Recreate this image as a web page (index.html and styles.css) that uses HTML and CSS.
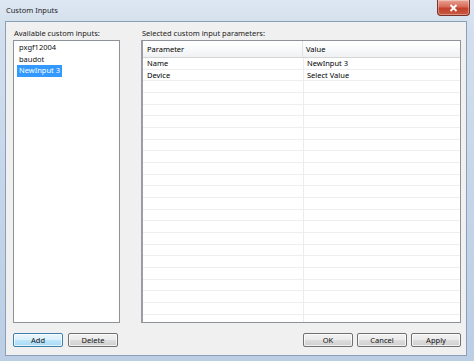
FILE: index.html
```html
<!DOCTYPE html>
<html>
<head>
<meta charset="utf-8">
<link rel="stylesheet" href="styles.css">
</head>
<body>
<div class="window">
  <div class="titlebar">
    <span class="title">Custom Inputs</span>
    <div class="close"><svg width="9" height="8" viewBox="0 0 9 8"><path d="M1.5 1 L7.5 7 M7.5 1 L1.5 7" stroke="#fff" stroke-width="1.8" fill="none"/></svg></div>
  </div>
  <div class="frame">
    <div class="client">
      <div class="cols">
        <div class="leftcol">
          <div class="label">Available custom inputs:</div>
          <div class="listbox">
            <div class="item"><span>pxgf12004</span></div>
            <div class="item"><span>baudot</span></div>
            <div class="item"><span class="sel">NewInput 3</span></div>
          </div>
          <div class="btnrow">
            <button class="btn focus">Add</button>
            <button class="btn">Delete</button>
          </div>
        </div>
        <div class="rightcol">
          <div class="label">Selected custom input parameters:</div>
          <div class="grid">
            <div class="ghead">
              <div class="c1">Parameter</div>
              <div class="c2">Value</div>
            </div>
            <div class="gbody">
              <div class="grow"><div class="c1">Name</div><div class="c2">NewInput 3</div></div>
              <div class="grow"><div class="c1">Device</div><div class="c2">Select Value</div></div>
            </div>
          </div>
          <div class="btnrow right">
            <button class="btn">OK</button>
            <button class="btn">Cancel</button>
            <button class="btn">Apply</button>
          </div>
        </div>
      </div>
    </div>
  </div>
</div>
</body>
</html>
```
FILE: styles.css
```css
* { box-sizing: border-box; }
html, body { margin: 0; padding: 0; }
body {
  width: 474px;
  height: 361px;
  overflow: hidden;
  font-family: "Noto Sans", "Open Sans", sans-serif;
  font-size: 7.5px;
  color: #000;
}
.window {
  width: 474px;
  height: 361px;
  display: flex;
  flex-direction: column;
  background: linear-gradient(to bottom, #dde7f2 0px, #d3dfed 30px, #c4d5e9 200px, #bccee4 361px);
}
.titlebar {
  height: 21px;
  display: flex;
  align-items: flex-start;
  justify-content: space-between;
  flex: none;
}
.title {
  padding-left: 6px;
  line-height: 20px;
  color: #1e1e1e;
}
.close {
  width: 33px;
  height: 16px;
  margin-right: 4px;
  border: 1px solid #7a3128;
  border-top: none;
  border-radius: 0 0 4px 4px;
  background: linear-gradient(to bottom, #e8a294 0%, #d66c58 45%, #c2412c 55%, #c95a40 100%);
  display: flex;
  align-items: center;
  justify-content: center;
  box-shadow: inset 0 0 0 1px rgba(255,255,255,0.35);
}
.frame {
  flex: 1;
  padding: 0 7px 5px 5px;
  display: flex;
}
.client {
  flex: 1;
  background: #f0f0f0;
  border: 1px solid #8c9fb8;
  padding: 6px 5px 0 7px;
}
.cols {
  display: flex;
  gap: 21px;
}
.leftcol { width: 107px; display: flex; flex-direction: column; }
.rightcol { width: 320px; display: flex; flex-direction: column; }
.label {
  line-height: 10px;
  height: 10px;
  margin-left: 1px;
  margin-bottom: 2px;
  color: #1a1a1a;
}
.listbox {
  height: 283px;
  background: #fff;
  border: 1px solid #8e9299;
  padding-top: 1px;
}
.item {
  height: 11.67px;
  line-height: 11.67px;
}
.item span {
  display: inline-block;
  margin-left: 3px;
  padding: 0 2px;
  color: #111;
}
.item span.sel {
  background: #3399ff;
  color: #fff;
}
.grid {
  height: 283px;
  background: #fff;
  border: 1px solid #8e9299;
  border-left: 2px solid #9a9da2;
  display: flex;
  flex-direction: column;
}
.ghead {
  height: 17px;
  display: flex;
  background: linear-gradient(to bottom, #ffffff 0%, #f7f8f9 60%, #f0f1f3 100%);
  border-bottom: 1px solid #d5d5d5;
  flex: none;
}
.ghead .c1, .ghead .c2 { line-height: 16px; }
.c1 {
  width: 160px;
  padding-left: 4px;
  border-right: 1px solid #e2e3e5;
  flex: none;
}
.c2 { flex: 1; padding-left: 3px; }
.gbody {
  flex: 1;
  background:
    linear-gradient(to right, transparent 160px, #ececec 160px, #ececec 161px, transparent 161px),
    repeating-linear-gradient(to bottom, transparent 0, transparent 10.67px, #eeeeee 10.67px, #eeeeee 11.67px);
}
.grow {
  height: 11.67px;
  display: flex;
  line-height: 11px;
}
.grow .c1 { border-right: none; width: 161px; }
.btnrow {
  display: flex;
  gap: 5px;
  margin-top: 10px;
}
.btnrow.right { justify-content: flex-end; gap: 4px; }
.btn {
  width: 50px;
  height: 14px;
  padding: 0;
  margin: 0;
  font-family: inherit;
  font-size: 7.5px;
  line-height: 12px;
  color: #111;
  border: 1px solid #707070;
  border-radius: 2px;
  background: linear-gradient(to bottom, #f2f2f2 0%, #ebebeb 50%, #dddddd 51%, #cfcfcf 100%);
  box-shadow: inset 0 0 0 1px rgba(255,255,255,0.7);
}
.btn.focus {
  border-color: #3c7fb1;
  background: linear-gradient(to bottom, #eaf6fd 0%, #d9f0fc 50%, #bee6fd 51%, #a7d9f5 100%);
}
```
